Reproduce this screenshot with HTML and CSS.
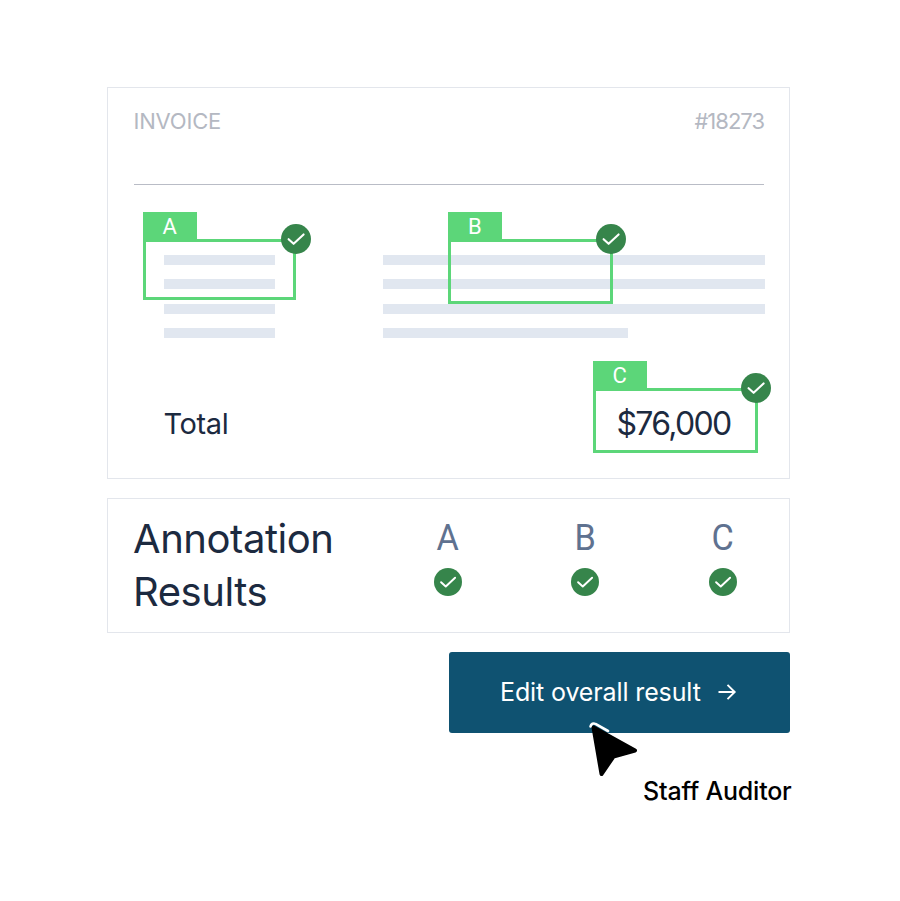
FILE: index.html
```html
<!DOCTYPE html>
<html lang="en">
<head>
<meta charset="utf-8">
<title>Annotation Results</title>
<link rel="stylesheet" href="styles.css">
</head>
<body>
<svg class="defs" width="0" height="0" aria-hidden="true">
  <symbol id="tick" viewBox="0 0 30 30">
    <path d="M7.6 15.2l5 4.6L22.6 10.4" fill="none" stroke="#fff" stroke-width="2.1" stroke-linecap="round" stroke-linejoin="round"/>
  </symbol>
</svg>
<main class="stage">
  <section class="card invoice">
    <header class="invoice-head">
      <span>INVOICE</span>
      <span class="number">#18273</span>
    </header>
    <div class="invoice-body">
      <div class="lines lines-left">
        <i></i><i></i><i></i><i></i>
      </div>
      <div class="lines lines-right">
        <i></i><i></i><i></i><i class="short"></i>
      </div>
      <div class="mark mark-a">
        <span class="tab">A</span>
        <span class="badge"><svg><use href="#tick"/></svg></span>
      </div>
      <div class="mark mark-b">
        <span class="tab">B</span>
        <span class="badge"><svg><use href="#tick"/></svg></span>
      </div>
    </div>
    <div class="total-row">
      <span class="total-label">Total</span>
      <div class="mark mark-c">
        <span class="tab">C</span>
        <span class="amount">$76,000</span>
        <span class="badge"><svg><use href="#tick"/></svg></span>
      </div>
    </div>
  </section>

  <section class="card results">
    <h2>Annotation<br>Results</h2>
    <div class="result-cols">
      <div class="result"><span>A</span><svg class="ok"><use href="#tick"/></svg></div>
      <div class="result"><span>B</span><svg class="ok"><use href="#tick"/></svg></div>
      <div class="result"><span>C</span><svg class="ok"><use href="#tick"/></svg></div>
    </div>
  </section>

  <div class="action">
    <button class="edit" type="button">
      <span>Edit overall result</span>
      <svg class="arrow" viewBox="0 0 20 20"><path d="M1.5 10h16M10.5 2.8L17.7 10l-7.2 7.2" fill="none" stroke="#fff" stroke-width="1.9"/></svg>
    </button>
    <svg class="cursor" viewBox="0 0 52 60"><path d="M5.5 6.5L47 29.5 25.5 35.5 13.5 53Z" fill="#000" stroke="#000" stroke-width="4" stroke-linejoin="round"/><path d="M2.5 5.5C3 2.8 5.5 1.8 7.5 3L20 10" fill="none" stroke="#fff" stroke-width="2.6" stroke-linecap="round"/></svg>
    <span class="auditor">Staff Auditor</span>
  </div>
</main>
</body>
</html>
```
FILE: styles.css
```css
* { box-sizing: border-box; }
html, body { margin: 0; background: #fff; }
body { font-family: Inter, "Liberation Sans", sans-serif; color: #1c2a40; }
.defs { position: absolute; }
.stage { width: 900px; height: 901px; padding: 87px 110px 0 107px; display: flex; flex-direction: column; gap: 19px; }
.card { border: 1.5px solid #e3e6ec; background: #fff; }
.invoice { height: 392px; padding: 0 25px 0 25.5px; display: flex; flex-direction: column; }
.invoice-head { height: 97px; flex: none; padding-top: 19px; display: flex; justify-content: space-between; border-bottom: 1px solid #b9bcc6; font-size: 22px; line-height: 28px; color: #b4b8c2; letter-spacing: -0.2px; }
.number { letter-spacing: -1px; }
.invoice-body { position: relative; height: 154px; flex: none; display: flex; padding: 70px 0 0 30px; gap: 108px; }
.lines { flex: none; display: flex; flex-direction: column; gap: 14.3px; }
.lines i { display: block; height: 10px; background: #e1e7f0; }
.lines-left { width: 111px; }
.lines-right { width: 382px; }
.lines-right .short { width: 245px; }
.mark { position: absolute; border: 3px solid #5cd679; }
.mark-a { left: 9px; top: 54px; width: 153px; height: 61px; }
.mark-b { left: 314px; top: 54px; width: 165px; height: 64.5px; }
.tab { position: absolute; left: -3px; top: -30.5px; width: 54.5px; height: 30px; background: #5cd679; color: #fff; font: 22px/30px Roboto, sans-serif; text-align: center; }
.badge { position: absolute; right: -18px; top: -18px; width: 30px; height: 30px; border-radius: 50%; background: #36854b; }
.badge svg { display: block; width: 30px; height: 30px; }
.mark-b .badge { right: -16.5px; }
.mark-c .badge { right: -16.5px; }
.total-row { flex: 1; display: flex; justify-content: space-between; align-items: flex-start; padding: 0 6.5px 0 30px; }
.total-label { font-size: 29px; line-height: 36px; margin-top: 67px; letter-spacing: -0.4px; }
.mark-c { position: relative; width: 165px; height: 64.5px; margin-top: 49px; display: flex; align-items: center; justify-content: center; padding: 7px 3px 0 0; }
.amount { font-size: 32px; line-height: 40px; letter-spacing: -1.7px; }
.results { height: 134.5px; padding: 13px 26px 13px 25px; display: flex; }
.results h2 { margin: 0; width: 287px; flex: none; font-size: 40px; line-height: 53px; font-weight: 400; letter-spacing: -0.45px; }
.result-cols { display: flex; gap: 0; }
.result { width: 137.5px; display: flex; flex-direction: column; align-items: center; padding-top: 4px; gap: 8px; }
.result-cols .result:first-child { margin-left: -41px; }
.result span { font: 36px/44px Roboto, sans-serif; color: #5f7290; transform: scaleX(0.95); }
.ok { display: block; width: 28px; height: 28px; border-radius: 50%; background: #36854b; }
.action { position: relative; height: 81px; display: flex; justify-content: flex-end; }
.edit { width: 341px; height: 81px; border: 0; border-radius: 3px; background: #0f5271; color: #fff; font: 400 25px/32px Inter, sans-serif; letter-spacing: -0.12px; display: flex; align-items: center; justify-content: flex-start; gap: 16px; padding: 0 0 0 51px; }
.arrow { width: 20px; height: 20px; }
.cursor { position: absolute; left: 481px; top: 69px; width: 52px; height: 60px; }
.auditor { position: absolute; left: 536px; top: 124px; font-size: 25px; line-height: 30px; font-weight: 500; color: #000; white-space: nowrap; letter-spacing: -0.2px; }
```
